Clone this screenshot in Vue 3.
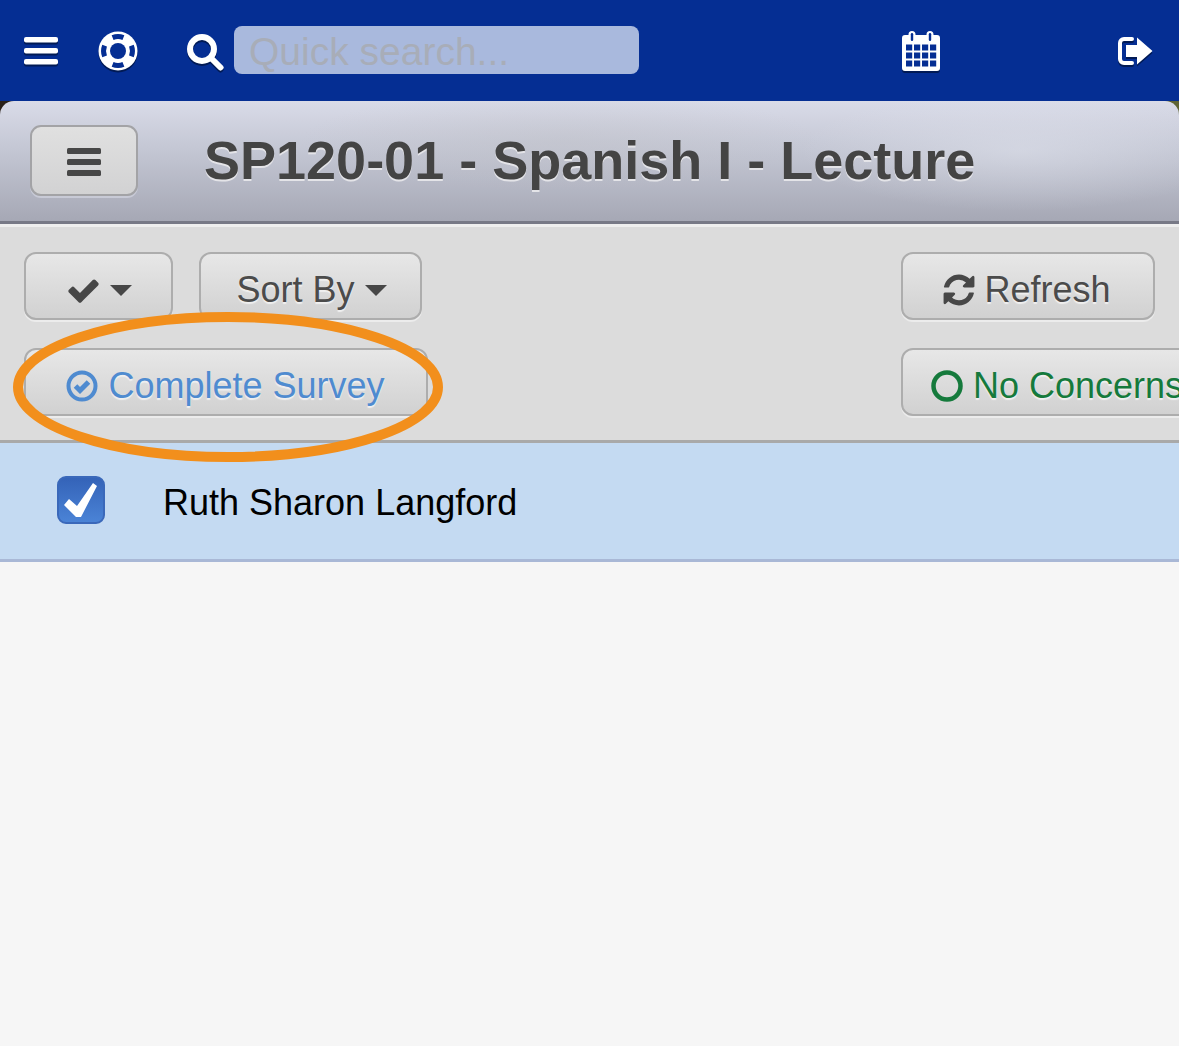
<script setup>
const title = 'SP120-01 - Spanish I - Lecture'
const calendarCells = []
for (const y of [13.5, 21.5, 29.5]) for (const x of [4, 12, 20, 28]) calendarCells.push({ x, y })
const refresh = 'M1639 1056q0 5-1 7-64 268-268 434.5T892 1664q-146 0-282.5-55T366 1452l-129 129q-19 19-45 19t-45-19-19-45v-448q0-26 19-45t45-19h448q26 0 45 19t19 45-19 45l-137 137q71 66 161 102t187 36q134 0 250-65t186-179q11-17 53-117 8-23 30-23h192q13 0 22.5 9.5t9.5 22.5zm25-800v448q0 26-19 45t-45 19h-448q-26 0-45-19t-19-45 19-45l138-138q-148-137-349-137-134 0-250 65T460 628q-11 17-53 117-8 23-30 23H178q-13 0-22.5-9.5T146 736v-7q65-268 270-434.5T896 128q146 0 284 55.5T1425 340l130-129q19-19 45-19t45 19 19 45z'
const check = 'M1671 566q0 40-28 68l-724 724-136 136q-28 28-68 28t-68-28l-136-136-362-362q-28-28-28-68t28-68l136-136q28-28 68-28t68 28l294 295 656-657q28-28 68-28t68 28l136 136q28 28 28 68z'
</script>

<template>
  <div class="page">
    <nav class="nav">
      <svg class="ic-bars" width="34" height="28" viewBox="0 0 34 28">
        <rect y="0" width="34" height="5.5" rx="2" />
        <rect y="11" width="34" height="5.5" rx="2" />
        <rect y="22" width="34" height="5.5" rx="2" />
      </svg>
      <svg class="ic-ring" width="40" height="40" viewBox="0 0 40 40">
        <circle cx="20" cy="20" r="19.5" fill="#fff" />
        <circle cx="20" cy="20" r="8" fill="#052e93" />
        <g fill="none" stroke="#052e93" stroke-width="5">
          <path d="M14.6 6.6A14.500 14.500 0 0 1 25.400 6.6" />
          <path d="M14.6 33.4A14.500 14.500 0 0 0 25.400 33.4" />
          <path d="M6.600 14.600A14.500 14.500 0 0 0 6.600 25.400" />
          <path d="M33.400 14.600A14.500 14.500 0 0 1 33.400 25.400" />
        </g>
      </svg>
      <svg class="ic-search" width="38" height="38" viewBox="0 0 38 38">
        <circle cx="15" cy="15" r="12" fill="none" stroke="#fff" stroke-width="6" />
        <line x1="24" y1="24" x2="33.500" y2="33.500" stroke="#fff" stroke-width="6" stroke-linecap="round" />
      </svg>
      <input class="search" placeholder="Quick search..." />
      <svg class="ic-cal" width="38" height="40" viewBox="0 0 38 40">
        <path d="M3 4h3.500V3.500a3.500 3.500 0 0 1 7 0V4h11v-.5a3.500 3.500 0 0 1 7 0V4H35a3 3 0 0 1 3 3v30a3 3 0 0 1-3 3H3a3 3 0 0 1-3-3V7a3 3 0 0 1 3-3z" fill="#fff" />
        <rect x="8.800" y="2" width="2.400" height="8" rx="1.200" fill="#052e93" />
        <rect x="26.800" y="2" width="2.400" height="8" rx="1.200" fill="#052e93" />
        <rect v-for="(c, i) in calendarCells" :key="i" :x="c.x" :y="c.y" width="6.200" height="6" fill="#052e93" />
      </svg>
      <svg class="ic-out" width="35" height="30" viewBox="0 0 35 30">
        <path d="M14 3H6a4 4 0 0 0-4 4v16a4 4 0 0 0 4 4h8" fill="none" stroke="#fff" stroke-width="4" stroke-linecap="round" />
        <path d="M8 9h11V1.500L34.500 15 19 28.500V21H8z" fill="#fff" />
      </svg>
    </nav>

    <div class="head-wrap">
      <header class="head">
        <button class="menu">
          <svg width="34" height="28" viewBox="0 0 34 28" fill="#474747">
            <rect y="0" width="34" height="6" rx="1.5" />
            <rect y="11" width="34" height="6" rx="1.5" />
            <rect y="22" width="34" height="6" rx="1.5" />
          </svg>
        </button>
        <h1 class="title">{{ title }}</h1>
      </header>
    </div>

    <section class="toolbar">
      <div class="col">
        <div class="line">
          <button class="btn check-btn">
            <svg width="35" height="35" viewBox="0 0 1792 1792"><path :d="check" fill="#474747" /></svg>
            <span class="caret"></span>
          </button>
          <button class="btn sort-btn">Sort By <span class="caret"></span></button>
        </div>
        <button class="btn survey">
          <svg width="32" height="32" viewBox="0 0 32 32">
            <circle cx="16" cy="16" r="13.500" fill="none" stroke="#4f8bd0" stroke-width="4" />
            <path d="M9.500 16 14 20.500 22.500 12" fill="none" stroke="#4f8bd0" stroke-width="5" />
          </svg>
          Complete Survey
        </button>
      </div>
      <div class="col right">
        <button class="btn refresh">
          <svg width="36" height="36" viewBox="0 0 1792 1792"><path :d="refresh" fill="#474747" /></svg>
          Refresh
        </button>
        <button class="btn concerns">
          <svg width="32" height="32" viewBox="0 0 32 32">
            <circle cx="16" cy="16" r="13.500" fill="none" stroke="#157a3c" stroke-width="4.500" />
          </svg>
          No Concerns
        </button>
      </div>
    </section>

    <div class="row">
      <span class="box">
        <svg class="tick" width="44" height="44" viewBox="0 0 44 44">
          <path d="M5 27 10 21 18 28 34 5 38 8 22 39H17Z" fill="#fff" />
        </svg>
      </span>
      <span class="name">Ruth Sharon Langford</span>
    </div>

    <svg class="ring-mark" width="440" height="156" viewBox="0 0 440 156">
      <ellipse cx="220" cy="78" rx="210" ry="70" fill="none" stroke="#f28f1c" stroke-width="10" />
    </svg>
  </div>
</template>

<style>
body { margin: 0; }
</style>

<style scoped>
.page {
  position: relative;
  width: 1179px;
  height: 1046px;
  overflow: hidden;
  background: #f6f6f6;
  font-family: "Liberation Sans", Arial, sans-serif;
}
button { font-family: inherit; }
.nav {
  height: 101px;
  box-sizing: border-box;
  display: flex;
  align-items: center;
  padding: 0 26px 0 24px;
  background: #052e93;
}
.nav svg { flex: none; filter: drop-shadow(0 2px 0 #011a55); }
.ic-bars { fill: #fff; }
.ic-ring { margin-left: 40px; }
.ic-search { margin-left: 49px; margin-top: 5px; }
.search {
  width: 405px;
  height: 48px;
  box-sizing: border-box;
  margin-left: 9px;
  margin-top: -1px;
  padding: 3px 15px 0;
  border: 0;
  border-radius: 8px;
  background: #a9b9dd;
  font: 39px "Liberation Sans", Arial, sans-serif;
  outline: none;
}
.search::placeholder { color: #a8adb8; opacity: 1; }
.ic-cal { margin-left: auto; }
.ic-out { margin-left: 178px; }

.head-wrap { background: linear-gradient(90deg, #2a2018 0 50%, #5f6434 50%); }
.head {
  height: 123px;
  box-sizing: border-box;
  display: flex;
  align-items: center;
  padding: 0 0 2px 30px;
  border-bottom: 3px solid #777986;
  border-radius: 14px 14px 0 0;
  background:
    radial-gradient(ellipse 220px 60px at 1020px 50px, rgba(225, 228, 238, 0.5), transparent),
    radial-gradient(ellipse 260px 50px at 560px 40px, rgba(190, 190, 195, 0.35), transparent),
    linear-gradient(180deg, #d9dbe8 0%, #c4c7d4 40%, #a6a8b5 100%);
}
.menu {
  width: 108px;
  height: 71px;
  display: flex;
  align-items: center;
  justify-content: center;
  padding: 3px 0 0;
  border: 2px solid #a3a3a6;
  border-radius: 11px;
  background: linear-gradient(180deg, #e0e0e0, #d2d2d3);
  box-shadow: 0 2px 0 #c8cad6;
}
.title {
  margin: 0 0 0 66px;
  font-size: 54px;
  font-weight: 700;
  color: #444;
  text-shadow: 0 2px 0 #e4e4e8;
  white-space: nowrap;
}

.toolbar {
  height: 219px;
  box-sizing: border-box;
  display: flex;
  justify-content: space-between;
  padding: 25px 24px 0;
  border-top: 3px solid #eeeeee;
  border-bottom: 3px solid #a9a9a9;
  background: #dcdcdc;
}
.col { display: flex; flex-direction: column; align-items: flex-start; gap: 28px; }
.col.right { width: 254px; }
.line { display: flex; gap: 26px; }
.btn {
  height: 68px;
  box-sizing: border-box;
  display: flex;
  align-items: center;
  justify-content: center;
  gap: 10px;
  padding: 8px 0 0;
  border: 2px solid #adadad;
  border-radius: 12px;
  background: linear-gradient(180deg, #e7e7e7, #d1d1d1);
  box-shadow: 0 2px 0 #ececec;
  font-size: 36px;
  color: #4b4b4b;
  text-shadow: 0 2px 1px #f0f0f0;
  white-space: nowrap;
}
.check-btn { width: 149px; gap: 9px; }
.sort-btn { width: 223px; padding-left: 2px; }
.survey { width: 404px; color: #4f8bd0; padding-right: 1px; }
.refresh { width: 254px; gap: 7px; padding-right: 4px; }
.concerns {
  width: 320px;
  justify-content: flex-start;
  padding-left: 28px;
  color: #157a3c;
}
.caret {
  width: 0;
  height: 0;
  border-left: 11px solid transparent;
  border-right: 11px solid transparent;
  border-top: 11px solid #474747;
}

.row {
  height: 119px;
  box-sizing: border-box;
  display: flex;
  align-items: center;
  padding-left: 57px;
  border-bottom: 3px solid #a9b8d6;
  background: #c4daf2;
}
.box {
  width: 48px;
  height: 48px;
  box-sizing: border-box;
  margin-top: -3px;
  display: flex;
  align-items: center;
  justify-content: center;
  border: 2px solid #3a68ba;
  border-radius: 9px;
  background: linear-gradient(180deg, #3463b8, #4a83d6);
}
.tick { filter: blur(0.6px); }
.name { margin-left: 58px; padding-top: 3px; font-size: 36px; color: #000; }

.ring-mark { position: absolute; left: 8px; top: 309px; }
</style>
